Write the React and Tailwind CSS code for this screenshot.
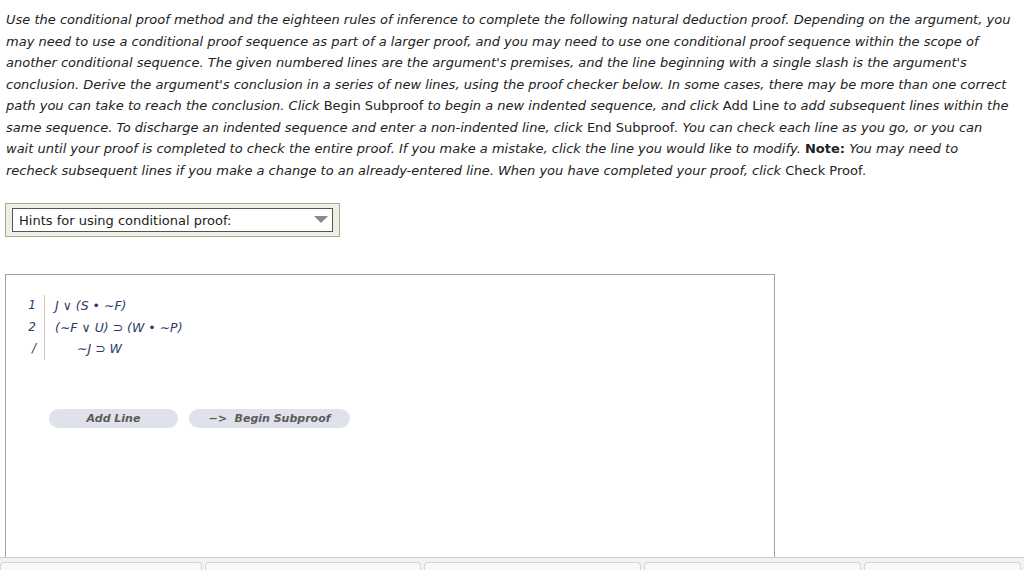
import React from 'react';

const lines = [
  { n: '1', text: <>J ∨ (S • ∼F)</> },
  { n: '2', text: <>(∼F ∨ U) ⊃ (W • ∼P)</> },
  { n: '/', text: <span className="pl-[22px]">∼J ⊃ W</span> },
];

const App = () => {
  return (
    <div
      className="relative w-[1024px] h-[570px] overflow-hidden bg-white text-[#222]"
      style={{ fontFamily: '"DejaVu Sans", Verdana, sans-serif' }}
    >
      {/* Instructions */}
      <p className="px-[6px] pt-[9px] text-[13px] leading-[21.5px] italic w-[1018px]">
        Use the conditional proof method and the eighteen rules of inference to complete the following natural deduction
        proof. Depending on the argument, you may need to use a conditional proof sequence as part of a larger proof, and
        you may need to use one conditional proof sequence within the scope of another conditional sequence. The given
        numbered lines are the argument's premises, and the line beginning with a single slash is the argument's
        conclusion. Derive the argument's conclusion in a series of new lines, using the proof checker below. In some
        cases, there may be more than one correct path you can take to reach the conclusion. Click{' '}
        <span className="not-italic">Begin Subproof</span> to begin a new indented sequence, and click{' '}
        <span className="not-italic">Add Line</span> to add subsequent lines within the same sequence. To discharge an
        indented sequence and enter a non-indented line, click <span className="not-italic">End Subproof</span>. You can
        check each line as you go, or you can wait until your proof is completed to check the entire proof. If you make a
        mistake, click the line you would like to modify. <span className="not-italic font-bold">Note:</span> You may
        need to recheck subsequent lines if you make a change to an already-entered line. When you have completed your
        proof, click <span className="not-italic">Check Proof</span>.
      </p>

      {/* Hints dropdown */}
      <div className="ml-[5px] mt-[22px] w-[335px] h-[34px] bg-[#eeeee2] border border-[#a8a8a0] px-[6px] py-[4px]">
        <div className="h-full bg-white border border-[#555] flex items-center justify-between pl-[6px] pr-[4px]">
          <span className="text-[13px] text-[#222] pt-[1px]">Hints for using conditional proof:</span>
          <svg width="14" height="8" viewBox="0 0 14 8">
            <polygon points="0,0 14,0 7,7" fill="#8a8a8a" />
          </svg>
        </div>
      </div>

      {/* Proof panel */}
      <div className="ml-[5px] mt-[37px] w-[770px] h-[284px] border-t border-l border-r border-[#a0a0a0] pt-[20px]">
        <div className="flex ml-[17px]">
          <div className="w-[22px] border-r border-[#c8c8c8] pr-[8px] flex flex-col items-end">
            {lines.map((l) => (
              <div key={l.n} className="h-[21.5px] leading-[21.5px] text-[12px] italic text-[#2c3a66]">
                {l.n}
              </div>
            ))}
          </div>
          <div className="pl-[10px] flex flex-col">
            {lines.map((l) => (
              <div key={l.n} className="h-[21.5px] leading-[21.5px] text-[12.5px] italic text-[#2c3a66] whitespace-nowrap">
                {l.text}
              </div>
            ))}
          </div>
        </div>

        <div className="flex gap-[11px] ml-[43px] mt-[49px]">
          <button className="w-[129px] h-[19px] rounded-full bg-[#dfe2ea] text-[11px] font-bold italic text-[#5a5a5a] leading-[19px]">
            Add Line
          </button>
          <button className="w-[161px] h-[19px] rounded-full bg-[#dfe2ea] text-[11px] font-bold italic text-[#5a5a5a] leading-[19px]">
            −&gt;&nbsp; Begin Subproof
          </button>
        </div>
      </div>

      {/* Bottom strip */}
      <div className="absolute left-0 right-0 top-[557px] h-[13px] border-t border-[#cfcfcf] bg-[#f2f2f2]">
        <div className="flex h-full pt-[4px]">
          {[205, 220, 221, 220, 160].map((w, i) => (
            <div
              key={i}
              className="h-full border-t border-l border-r border-[#d4d4d4] rounded-t-[4px] bg-[#f8f8f8] mr-[3px]"
              style={{ width: w }}
            />
          ))}
        </div>
      </div>
    </div>
  );
};

export default App;
